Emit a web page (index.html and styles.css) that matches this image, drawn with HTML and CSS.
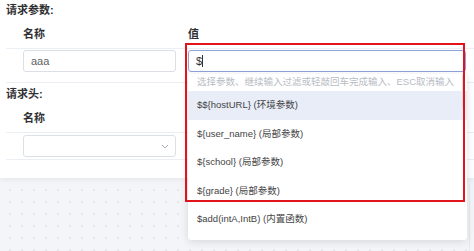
FILE: index.html
```html
<!DOCTYPE html>
<html lang="zh-CN">
<head>
    <meta charset="UTF-8">
    <title>参数设置</title>
    <link rel="stylesheet" href="styles.css">
</head>
<body>
    <div class="card">
        <div class="section-title">请求参数:</div>
        <div class="param-table">
            <div class="head">
                <div class="col-name">名称</div>
                <div class="col-value">值</div>
            </div>
            <div class="row row-tall">
                <div class="col-name"><div class="field">aaa</div></div>
                <div class="col-value"><div class="field focused">$<span class="caret"></span></div></div>
            </div>
        </div>

        <div class="section-title">请求头:</div>
        <div class="param-table">
            <div class="head">
                <div class="col-name">名称</div>
                <div class="col-value"></div>
            </div>
            <div class="row">
                <div class="col-name">
                    <div class="field select">
                        <svg class="chevron" width="8" height="5" viewBox="0 0 8 5"><path d="M1 1l3 3 3-3" fill="none" stroke="#a8abb2" stroke-width="1"/></svg>
                    </div>
                </div>
                <div class="col-value"></div>
            </div>
        </div>
    </div>
    <div class="canvas"></div>

    <div class="suggest">
        <div class="hint">选择参数、继续输入过滤或轻敲回车完成输入、ESC取消输入</div>
        <div class="item active">$${hostURL} (环境参数)</div>
        <div class="item">${user_name} (局部参数)</div>
        <div class="item">${school} (局部参数)</div>
        <div class="item">${grade} (局部参数)</div>
        <div class="item">$add(intA,IntB) (内置函数)</div>
        <div class="thumb"></div>
    </div>
    <div class="mark"></div>
</body>
</html>
```

FILE: styles.css
```css
* {
    margin: 0;
    padding: 0;
    box-sizing: border-box;
}

body {
    font-family: 'Liberation Sans', 'Noto Sans CJK SC', sans-serif;
    font-size: 11px;
    color: #333;
    background-color: #f4f5f8;
    width: 474px;
    height: 251px;
    overflow: hidden;
    position: relative;
}

.card {
    background-color: #fff;
    padding: 0 0 18px 6px;
    box-shadow: 0 2px 6px rgba(0, 0, 0, 0.06);
}

.section-title {
    height: 20px;
    line-height: 20px;
    font-weight: bold;
    color: #303133;
}

.param-table + .section-title {
    margin-top: 1px;
}

.head, .row {
    display: flex;
}

.head {
    height: 28px;
    line-height: 28px;
    font-weight: bold;
    color: #303133;
}

.row {
    border-top: 1px solid #ebeef5;
    border-bottom: 1px solid #ebeef5;
    padding: 2px 0;
}

.row-tall {
    padding: 1px 0 10px;
}

.col-name {
    width: 176px;
    padding: 0 6px 0 17px;
}

.col-value {
    flex: 1;
    padding: 0 8px 0 6px;
}

.field {
    height: 22px;
    line-height: 20px;
    border: 1px solid #dcdfe6;
    border-radius: 3px;
    padding: 0 7px;
    color: #606266;
    position: relative;
}

.field.focused {
    border-color: #8ea2dd;
    color: #333;
}

.caret {
    display: inline-block;
    width: 1px;
    height: 12px;
    background-color: #333;
    vertical-align: -2px;
}

.chevron {
    position: absolute;
    right: 6px;
    top: 8px;
}

.canvas {
    height: 68px;
    margin: 6px 4px 0;
    border-right: 1px solid #e6e8ec;
    background-image: radial-gradient(#e4e6ea 0.7px, transparent 1px);
    background-size: 12px 12px;
}

.suggest {
    position: absolute;
    left: 188px;
    top: 74px;
    width: 279px;
    height: 166px;
    background-color: #fff;
    border-radius: 3px;
    box-shadow: 0 2px 8px rgba(0, 0, 0, 0.12);
    font-size: 9.5px;
}

.hint {
    height: 17px;
    line-height: 16px;
    padding-left: 9px;
    color: #b8bcc4;
    white-space: nowrap;
    overflow: hidden;
}

.item {
    height: 28.5px;
    line-height: 28.5px;
    padding-left: 9px;
    color: #444;
    white-space: nowrap;
}

.item.active {
    background-color: #e8edf8;
}

.thumb {
    position: absolute;
    right: 2px;
    top: 0;
    width: 3px;
    height: 34px;
    background-color: #dcdde0;
    border-radius: 2px;
}

.mark {
    position: absolute;
    left: 185px;
    top: 43px;
    width: 280px;
    height: 159px;
    border: 2px solid #e3131b;
}
```
